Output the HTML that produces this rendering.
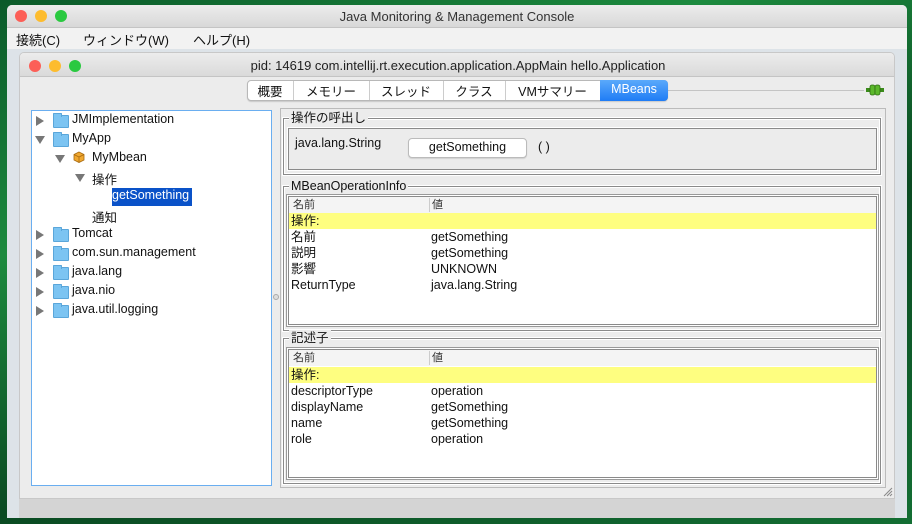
<!DOCTYPE html>
<html><head><meta charset="utf-8"><style>
*{margin:0;padding:0;box-sizing:border-box}
body{width:912px;height:524px;overflow:hidden;position:relative;font-family:"Liberation Sans","Noto Sans CJK JP",sans-serif;font-size:12.5px;color:#111;
background:linear-gradient(160deg,#0b5a2a 0%,#1c8a3e 30%,#0a4a22 60%,#136e33 100%)}
.a{position:absolute}
.lights span{position:absolute;width:12px;height:12px;border-radius:50%}
.t{position:absolute;white-space:nowrap}
.grp{position:absolute;border:1px solid #8a8a8a;box-shadow:inset 0 0 0 1px #fff,0 0 0 1px #fff}
.gl{position:absolute;top:-9px;left:5px;background:#ececec;padding:0 2px;font-size:12.5px;line-height:16px}
.tbl{position:absolute;background:#fff;border:1px solid #8a8a8a;box-shadow:0 0 0 1px #fff,0 0 0 2px #999}
.row{position:absolute;left:0;right:0;height:16px;font-size:12.5px;line-height:16px}
.row span{position:absolute}
.folder{position:absolute;width:16px;height:13px;background:#7cc4f2;border:1px solid #5aa6da;border-radius:1px}
.folder:before{content:"";position:absolute;left:-1px;top:-3px;width:7px;height:3px;background:#7cc4f2;border:1px solid #5aa6da;border-bottom:none;border-radius:1px 1px 0 0}
.tri{position:absolute;width:0;height:0}
.tr{border-top:5px solid transparent;border-bottom:5px solid transparent;border-left:8px solid #777}
.td{border-left:5px solid transparent;border-right:5px solid transparent;border-top:8px solid #777}
</style></head><body>
<div class="a" style="left:7px;top:5px;width:900px;height:513px;background:#dde3e8;border-radius:5px 5px 0 0;overflow:hidden">
 <div class="a" style="left:0;top:0;width:900px;height:23px;background:linear-gradient(#ececec,#d8d8d8);border-bottom:1px solid #c4c4c4"></div>
 <div class="lights"><span style="left:8px;top:5px;background:#fc5f57"></span><span style="left:28px;top:5px;background:#fdbc2e"></span><span style="left:48px;top:5px;background:#2ac940"></span></div>
 <div class="t" style="left:0;width:900px;text-align:center;top:4px;font-size:13px;color:#333">Java Monitoring &amp; Management Console</div>
 <div class="a" style="left:0;top:23px;width:900px;height:21px;background:#f2f2f2"></div>
 <div class="t" style="left:9px;top:25px;font-size:13px">接続(C)</div>
 <div class="t" style="left:76px;top:25px;font-size:13px">ウィンドウ(W)</div>
 <div class="t" style="left:186px;top:25px;font-size:13px">ヘルプ(H)</div>
</div>
<div class="a" style="left:19px;top:52px;width:876px;height:447px;background:#ececec;border:1px solid #c8c8c8;border-radius:5px 5px 0 0;overflow:hidden">
 <div class="a" style="left:0;top:0;width:876px;height:24px;background:linear-gradient(#ececec,#dadada);border-bottom:1px solid #c4c4c4"></div>
 <div class="lights"><span style="left:9px;top:7px;background:#fc5f57"></span><span style="left:29px;top:7px;background:#fdbc2e"></span><span style="left:49px;top:7px;background:#2ac940"></span></div>
 <div class="t" style="left:0;width:876px;text-align:center;top:5px;font-size:13px;color:#222">pid: 14619 com.intellij.rt.execution.application.AppMain hello.Application</div>
</div>
<div class="a" style="left:19px;top:499px;width:876px;height:19px;background:#d4d4d4"></div>
<div class="a" style="left:668px;top:90px;width:196px;height:1px;background:#c4c4c4"></div>
<div class="a" style="left:247px;top:80px;width:421px;height:21px;background:#fff;border:1px solid #b8b8b8;border-radius:4px;box-shadow:0 1px 1px rgba(0,0,0,.15)"></div>
<div class="a" style="left:293px;top:81px;width:1px;height:19px;background:#ccc"></div>
<div class="a" style="left:369px;top:81px;width:1px;height:19px;background:#ccc"></div>
<div class="a" style="left:443px;top:81px;width:1px;height:19px;background:#ccc"></div>
<div class="a" style="left:505px;top:81px;width:1px;height:19px;background:#ccc"></div>
<div class="a" style="left:600px;top:80px;width:68px;height:21px;background:linear-gradient(#5aa9fb,#1f7cf5);border-radius:0 4px 4px 0"></div>
<div class="t" style="left:247px;width:46px;text-align:center;top:81px;font-size:12.5px">概要</div>
<div class="t" style="left:293px;width:76px;text-align:center;top:81px;font-size:12.5px">メモリー</div>
<div class="t" style="left:369px;width:74px;text-align:center;top:81px;font-size:12.5px">スレッド</div>
<div class="t" style="left:443px;width:62px;text-align:center;top:81px;font-size:12.5px">クラス</div>
<div class="t" style="left:505px;width:95px;text-align:center;top:81px;font-size:12.5px">VMサマリー</div>
<div class="t" style="left:600px;width:68px;text-align:center;top:82px;font-size:12.5px;color:#fff">MBeans</div>
<svg class="a" style="left:866px;top:84px" width="18" height="12"><rect x="0" y="4" width="5" height="4" fill="#3a8a1a"/><rect x="13" y="4" width="5" height="4" fill="#3a8a1a"/><rect x="4" y="1" width="5" height="10" rx="2" fill="#5cb82c" stroke="#2e6e12" stroke-width=".8"/><rect x="9" y="1" width="5" height="10" rx="2" fill="#5cb82c" stroke="#2e6e12" stroke-width=".8"/></svg>
<div class="a" style="left:31px;top:110px;width:241px;height:376px;background:#fff;border:1px solid #6aaef0"></div>
<div class="tri tr" style="left:36px;top:116px"></div><div class="folder" style="left:53px;top:115px"></div><div class="t" style="left:72px;top:112px">JMImplementation</div>
<div class="tri td" style="left:35px;top:136px"></div><div class="folder" style="left:53px;top:134px"></div><div class="t" style="left:72px;top:131px">MyApp</div>
<div class="tri td" style="left:55px;top:155px"></div><svg class="a" style="left:73px;top:151px" width="12" height="12"><path d="M6 1 L11 3.5 V9 L6 11.5 L1 9 V3.5Z" fill="#f0a830" stroke="#a86a10" stroke-width=".8"/><path d="M1 3.5 L6 6 L11 3.5 M6 6 V11.5" stroke="#a86a10" stroke-width=".8" fill="none"/></svg><div class="t" style="left:92px;top:150px">MyMbean</div>
<div class="tri td" style="left:75px;top:174px"></div><div class="t" style="left:92px;top:169px">操作</div>
<div class="a" style="left:112px;top:188px;width:80px;height:18px;background:#0a52c8"></div><div class="t" style="left:112px;top:188px;color:#fff">getSomething</div>
<div class="t" style="left:92px;top:207px">通知</div>
<div class="tri tr" style="left:36px;top:230px"></div><div class="folder" style="left:53px;top:229px"></div><div class="t" style="left:72px;top:226px">Tomcat</div>
<div class="tri tr" style="left:36px;top:249px"></div><div class="folder" style="left:53px;top:248px"></div><div class="t" style="left:72px;top:245px">com.sun.management</div>
<div class="tri tr" style="left:36px;top:268px"></div><div class="folder" style="left:53px;top:267px"></div><div class="t" style="left:72px;top:264px">java.lang</div>
<div class="tri tr" style="left:36px;top:287px"></div><div class="folder" style="left:53px;top:286px"></div><div class="t" style="left:72px;top:283px">java.nio</div>
<div class="tri tr" style="left:36px;top:306px"></div><div class="folder" style="left:53px;top:305px"></div><div class="t" style="left:72px;top:302px">java.util.logging</div>
<div class="a" style="left:273px;top:294px;width:6px;height:6px;border-radius:50%;background:#ddd;border:1px solid #aaa"></div>
<div class="a" style="left:280px;top:108px;width:606px;height:380px;border:1px solid #bbb"></div>
<div class="grp" style="left:283px;top:118px;width:598px;height:57px"><div class="gl">操作の呼出し</div></div>
<div class="a" style="left:288px;top:128px;width:589px;height:42px;border:1px solid #8a8a8a;box-shadow:0 0 0 1px #fff"></div>
<div class="t" style="left:295px;top:136px;font-size:12.5px">java.lang.String</div>
<div class="a" style="left:408px;top:138px;width:119px;height:20px;background:#fff;border:1px solid #bbb;border-radius:4px;box-shadow:0 1px 1px rgba(0,0,0,.12)"></div>
<div class="t" style="left:408px;width:119px;text-align:center;top:140px;font-size:12.5px">getSomething</div>
<div class="t" style="left:538px;top:140px">( )</div>
<div class="grp" style="left:283px;top:186px;width:598px;height:145px"><div class="gl">MBeanOperationInfo</div></div>
<div class="tbl" style="left:288px;top:196px;width:589px;height:129px">
 <div class="row" style="top:0;background:#f4f4f4;font-size:11px;color:#333"><span style="left:4px">名前</span><span style="left:143px">値</span></div>
 <div class="a" style="left:140px;top:1px;width:1px;height:14px;background:#ccc"></div>
 <div class="row" style="top:16px;background:#fefe80"><span style="left:2px">操作:</span></div>
 <div class="row" style="top:32px"><span style="left:2px">名前</span><span style="left:142px">getSomething</span></div>
 <div class="row" style="top:48px"><span style="left:2px">説明</span><span style="left:142px">getSomething</span></div>
 <div class="row" style="top:64px"><span style="left:2px">影響</span><span style="left:142px">UNKNOWN</span></div>
 <div class="row" style="top:80px"><span style="left:2px">ReturnType</span><span style="left:142px">java.lang.String</span></div>
</div>
<div class="grp" style="left:283px;top:338px;width:598px;height:146px"><div class="gl">記述子</div></div>
<div class="tbl" style="left:288px;top:349px;width:589px;height:129px">
 <div class="row" style="top:0;background:#f4f4f4;font-size:11px;color:#333"><span style="left:4px">名前</span><span style="left:143px">値</span></div>
 <div class="a" style="left:140px;top:1px;width:1px;height:14px;background:#ccc"></div>
 <div class="row" style="top:17px;background:#fefe80"><span style="left:2px">操作:</span></div>
 <div class="row" style="top:33px"><span style="left:2px">descriptorType</span><span style="left:142px">operation</span></div>
 <div class="row" style="top:49px"><span style="left:2px">displayName</span><span style="left:142px">getSomething</span></div>
 <div class="row" style="top:65px"><span style="left:2px">name</span><span style="left:142px">getSomething</span></div>
 <div class="row" style="top:81px"><span style="left:2px">role</span><span style="left:142px">operation</span></div>
</div>
<svg class="a" style="left:883px;top:487px" width="10" height="10"><path d="M9 1 L1 9 M9 4 L4 9 M9 7 L7 9" stroke="#888" stroke-width="1"/></svg>
</body></html>
